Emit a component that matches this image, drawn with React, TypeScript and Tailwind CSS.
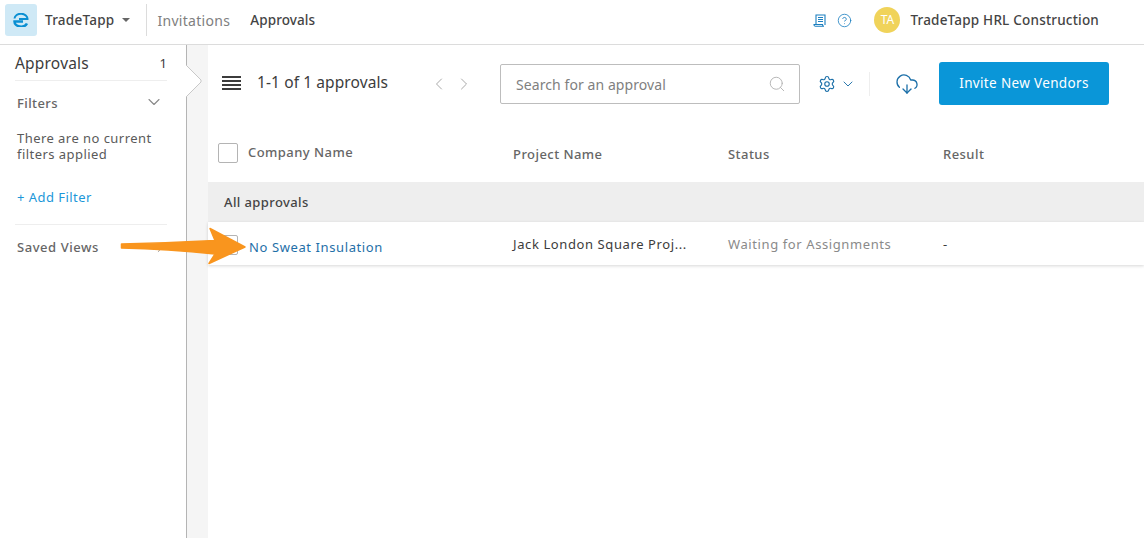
import { ChevronDown, ChevronLeft, ChevronRight, Search, Settings, CloudDownload, CircleHelp } from "lucide-react";

const font = "font-['Noto_Sans','Open_Sans',sans-serif]";

const Logo = () => (
  <div className="w-8 h-8 rounded-[3px] bg-[#cfe9f6] flex items-center justify-center">
    <svg width="18" height="14" viewBox="0 0 18 14" fill="none" stroke="#0a8fd2">
      <path d="M2.5 5.5A6.5 5 0 0 1 15.5 6H7" strokeWidth="2" />
      <path d="M11 8.4H2.5A6.5 5 0 0 0 15 10.5" strokeWidth="2.5" />
    </svg>
  </div>
);

const Sidebar = () => (
  <aside className="w-[187px] shrink-0 border-r border-[#b4b4b4] pr-[19px] relative bg-white">
    <div className="ml-[15px] h-[36px] pt-[2px] border-b border-[#eeeeee] flex items-center justify-between">
      <span className="text-[15.5px] text-[#3c3c3c] tracking-[0.2px]">Approvals</span>
      <span className="text-[13px] text-[#3c3c3c]">1</span>
    </div>
    <div className="ml-[17px] mt-[13px] flex items-center justify-between">
      <span className="text-[13px] font-medium text-[#666666] tracking-[0.4px]">Filters</span>
      <ChevronDown className="w-[20px] h-[20px] text-[#888888] mr-[3px] mt-[-4px]" strokeWidth={1.3} />
    </div>
    <p className="ml-[17px] mt-[16px] text-[13px] leading-[16px] text-[#5a5a5a] tracking-[0.45px]">
      There are no current<br />filters applied
    </p>
    <div className="ml-[17px] mt-[26px] text-[13px] text-[#1c97d9] tracking-[0.45px] leading-[18px]">+ Add Filter</div>
    <div className="ml-[15px] mt-[18px] h-[45px] pt-[2px] border-t border-[#eeeeee] flex items-center justify-between">
      <span className="ml-[2px] text-[13px] font-medium text-[#666666] tracking-[0.55px]">Saved Views</span>
      <ChevronRight className="w-[14px] h-[14px] text-[#888888]" strokeWidth={1.5} />
    </div>
  </aside>
);

const Toolbar = () => (
  <div className="h-[79px] flex items-center pl-[14px] pb-[1px]">
    <div className="flex flex-col gap-[2px] w-[19px] mb-[2px]">
      <span className="h-[2px] bg-[#3c3c3c]" />
      <span className="h-[2px] bg-[#3c3c3c]" />
      <span className="h-[2px] bg-[#3c3c3c]" />
      <span className="h-[2px] bg-[#3c3c3c]" />
    </div>
    <span className="ml-[16px] w-[172px] mb-[2px] text-[15.5px] text-[#3c3c3c] tracking-[0.1px]">1-1 of 1 approvals</span>
    <ChevronLeft className="w-[20px] h-[20px] text-[#a0a0a0]" strokeWidth={1.1} />
    <ChevronRight className="ml-[5px] w-[20px] h-[20px] text-[#a0a0a0]" strokeWidth={1.1} />
    <div className="ml-[26px] w-[300px] h-[40px] border border-[#bdbdbd] rounded-[2px] flex items-center justify-between pl-[15px] pr-[13px]">
      <span className="text-[14px] text-[#808080] tracking-[0.08px]">Search for an approval</span>
      <Search className="w-[18px] h-[18px] text-[#b0b0b0]" strokeWidth={1.2} />
    </div>
    <Settings className="ml-[18px] w-[18px] h-[18px] text-[#1b6fa8]" strokeWidth={1.5} />
    <ChevronDown className="ml-[4px] w-[16px] h-[16px] text-[#1b6fa8]" strokeWidth={1.4} />
    <span className="ml-[13px] w-px h-[24px] bg-[#eeeeee]" />
    <CloudDownload className="ml-[25px] w-[24px] h-[24px] text-[#1b6fa8]" strokeWidth={1.3} />
    <button className="ml-[20px] mb-[2px] w-[170px] h-[43px] rounded-[3px] bg-[#0a96d8] text-white text-[13.5px] tracking-[0.35px]">
      Invite New Vendors
    </button>
  </div>
);

const Checkbox = () => <span className="block w-[20px] h-[20px] border border-[#b4b4b4] rounded-[2px] bg-white" />;

const Table = () => (
  <div className="text-[13px]">
    <div className="h-[58px] pt-[1px] flex items-center font-medium text-[#666666] tracking-[0.45px]">
      <div className="w-[305px] pl-[10px] flex items-center gap-[10px] pb-[2px]">
        <Checkbox />
        <span>Company Name</span>
      </div>
      <div className="w-[215px] pt-[3px]">Project Name</div>
      <div className="w-[215px] pt-[3px]">Status</div>
      <div className="pt-[3px]">Result</div>
    </div>
    <div className="h-[40px] pt-[2px] bg-[#eeeeee] flex items-center pl-[16px] font-medium text-[#444444] tracking-[0.4px]">All approvals</div>
    <div className="h-[43px] pt-[2px] flex items-center shadow-[0_1px_3px_rgba(0,0,0,0.16)] bg-white">
      <div className="w-[305px] pl-[10px] flex items-center gap-[11px]">
        <Checkbox />
        <span className="text-[#1f6fa8] tracking-[0.6px] pt-[7px]">No Sweat Insulation</span>
      </div>
      <div className="w-[215px] text-[#3c3c3c] tracking-[0.6px]">Jack London Square Proj...</div>
      <div className="w-[215px] text-[#8a8a8a] tracking-[0.6px]">Waiting for Assignments</div>
      <div className="text-[#3c3c3c]">-</div>
    </div>
  </div>
);

const Arrow = () => (
  <svg className="absolute left-[118px] top-[224px]" width="134" height="44" viewBox="0 0 134 44">
    <path d="M3.5 20L3.5 24Q50 25 97 30L91 39.5L127 23L92 4.5L97 16.5Q50 19 3.5 20Z" fill="#f9951e" stroke="#f9951e" strokeWidth="1.5" strokeLinejoin="round" />
  </svg>
);

export default function App() {
  return (
    <div className={`relative w-[1144px] h-[538px] overflow-hidden bg-white ${font}`}>
      <header className="h-[45px] border-b border-[#dcdcdc] flex items-center pl-[5px] pb-[4px]">
        <Logo />
        <span className="ml-[8px] text-[13.5px] font-medium text-[#444444] tracking-[0.25px]">TradeTapp</span>
        <svg className="ml-[8px]" width="8" height="4" viewBox="0 0 8 4"><path d="M0 0h8L4 4z" fill="#666666" /></svg>
        <span className="ml-[16px] w-px h-[32px] bg-[#dcdcdc]" />
        <span className="ml-[10px] text-[14px] text-[#808080] tracking-[0.3px]">Invitations</span>
        <span className="ml-[20px] text-[13.5px] font-medium text-[#444444] tracking-[0.1px]">Approvals</span>
        <div className="ml-auto flex items-center pr-[45px]">
          <svg width="13" height="13" viewBox="0 0 13 13" fill="none" stroke="#1b7fc0" strokeWidth="1.1">
            <path d="M3 10.5V1h9v10" />
            <path d="M5 3.5h5M5 5.5h5M5 7.5h5" />
            <path d="M1 10.5h8.5c0 1 .6 1.8 1.5 1.8H2.5C1.6 12.3 1 11.5 1 10.5z" />
          </svg>
          <CircleHelp className="ml-[11px] w-[15px] h-[15px] text-[#1b7fc0]" strokeWidth={1.3} />
          <span className="ml-[22px] w-[26px] h-[26px] rounded-full bg-[#f0d35a] text-white text-[12px] flex items-center justify-center">TA</span>
          <span className="ml-[10px] text-[13.5px] font-medium text-[#444444] tracking-[0.2px]">TradeTapp HRL Construction</span>
        </div>
      </header>
      <div className="flex h-[493px]">
        <Sidebar />
        <div className="w-[21px] shrink-0 bg-[#f5f5f5]" />
        <main className="flex-1 bg-white">
          <Toolbar />
          <Table />
        </main>
      </div>
      {/* notch on the sidebar edge */}
      <svg className="absolute left-[186px] top-[65px]" width="16" height="36" viewBox="0 0 16 36">
        <path d="M0 0L15 15V17L0 32Z" fill="white" />
        <path d="M0 0L15 15V17L0 32" fill="none" stroke="#c8c8c8" />
      </svg>
      <Arrow />
    </div>
  );
}
